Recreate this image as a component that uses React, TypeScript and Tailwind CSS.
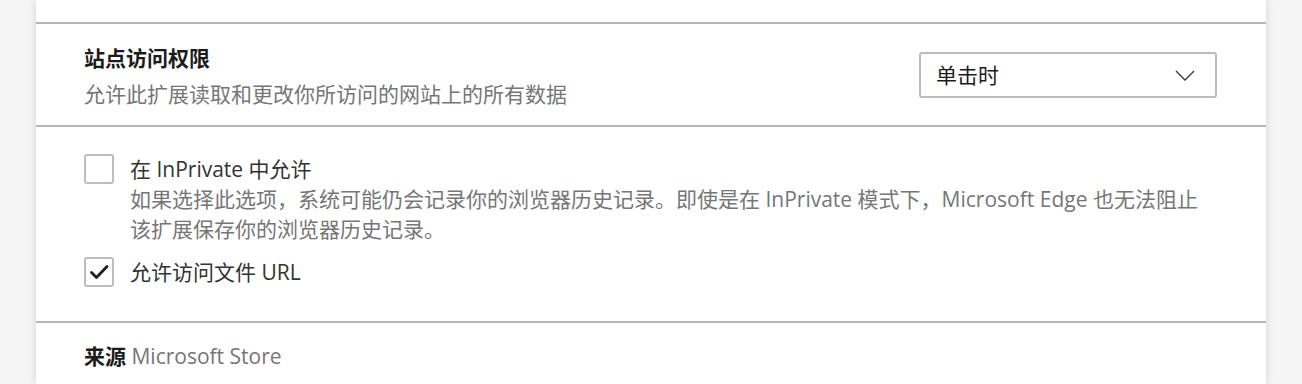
import React from "react";

const font = { fontFamily: '"Open Sans", "Noto Sans CJK SC", sans-serif' };

function Checkbox({ checked }: { checked?: boolean }) {
  return (
    <div className="w-[30px] h-[30px] shrink-0 rounded-[3px] border-2 border-[#bdbdbd] bg-white flex items-center justify-center">
      {checked && (
        <svg width="20" height="16" viewBox="0 0 20 16" fill="none">
          <path d="M2.5 8.5 L7.5 13.5 L18 2.5" stroke="#1f1f1f" strokeWidth="2.8" strokeLinecap="round" strokeLinejoin="round" />
        </svg>
      )}
    </div>
  );
}

export default function App() {
  return (
    <div className="w-[1302px] h-[384px] bg-[#f5f5f5] overflow-hidden" style={font}>
      <div className="ml-[36px] w-[1230px] h-full bg-white shadow-[0_0_8px_rgba(0,0,0,0.14)]">
        <div className="h-[22px] border-b-2 border-[#b5b5b5] box-content" />
        <div className="flex items-start justify-between pl-12 pr-[49px] pt-5 pb-4 border-b-2 border-[#b5b5b5]">
          <div>
            <div className="text-[21px] leading-[28px] font-bold text-[#1b1b1b]">站点访问权限</div>
            <div className="mt-[7px] text-[21px] leading-[30px] text-[#767676]">允许此扩展读取和更改你所访问的网站上的所有数据</div>
          </div>
          <div className="mt-2 w-[298px] h-[46px] rounded-[3px] border-2 border-[#bcbcbc] flex items-center justify-between pl-[15px] pr-[20px]">
            <span className="text-[21px] leading-[30px] text-[#1b1b1b]">单击时</span>
            <svg width="20" height="11" viewBox="0 0 20 11" fill="none">
              <path d="M1 1 L10 10 L19 1" stroke="#333" strokeWidth="1.3" />
            </svg>
          </div>
        </div>
        <div className="pl-12 pr-[40px] pt-[27px] pb-[34px] border-b-2 border-[#b5b5b5]">
          <div className="flex items-start gap-4">
            <Checkbox />
            <div>
              <div className="text-[21px] leading-[30px] text-[#333333]">在 InPrivate 中允许</div>
              <div className="text-[21px] leading-[30px] text-[#767676] whitespace-nowrap">
                如果选择此选项，系统可能仍会记录你的浏览器历史记录。即使是在 InPrivate 模式下，Microsoft Edge 也无法阻止
                <br />
                该扩展保存你的浏览器历史记录。
              </div>
            </div>
          </div>
          <div className="mt-[13px] flex items-start gap-4">
            <Checkbox checked />
            <div className="text-[21px] leading-[30px] text-[#333333]">允许访问文件 URL</div>
          </div>
        </div>
        <div className="pl-12 pt-[18px] text-[21px] leading-[30px]">
          <span className="font-bold text-[#1b1b1b]">来源</span>
          <span className="text-[#767676]"> Microsoft Store</span>
        </div>
      </div>
    </div>
  );
}
